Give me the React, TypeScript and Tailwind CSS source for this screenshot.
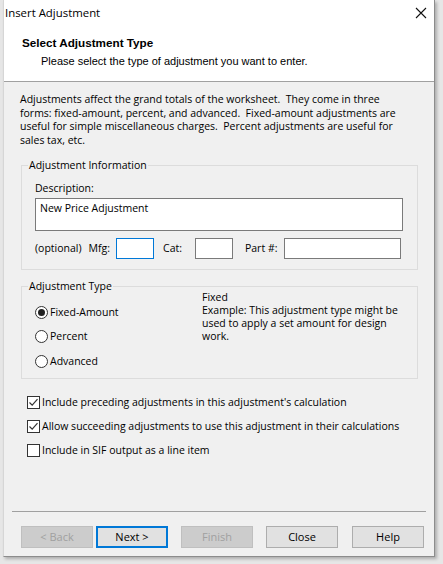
import React from 'react';

const ui = { fontFamily: '"Open Sans", "Noto Sans", sans-serif' };
const arial = { fontFamily: '"Liberation Sans", Arial, sans-serif' };

const Radio = ({ checked, label }: { checked?: boolean; label: string }) => (
  <div className="flex items-center h-[14px]">
    <span className="w-[13px] h-[13px] rounded-full border border-[#333] bg-white flex items-center justify-center">
      {checked && <span className="w-[7px] h-[7px] rounded-full bg-[#222]" />}
    </span>
    <span className="ml-[2px]">{label}</span>
  </div>
);

const Check = ({ checked, label }: { checked?: boolean; label: string }) => (
  <div className="flex items-center h-[14px]">
    <span className="w-[13px] h-[13px] border border-[#333] bg-white flex items-center justify-center">
      {checked && (
        <svg width="11" height="11" viewBox="0 0 11 11" fill="none">
          <path d="M1.5 5.5 L4.2 8.2 L9.5 2.2" stroke="#333" strokeWidth="1.2" />
        </svg>
      )}
    </span>
    <span className="ml-[2px]">{label}</span>
  </div>
);

const Btn = ({ label, disabled, focused }: { label: string; disabled?: boolean; focused?: boolean }) => (
  <div
    className={
      'w-[72px] h-[22px] shrink-0 flex items-center justify-center text-[11px] ' +
      (disabled
        ? 'bg-[#cccccc] border border-[#bfbfbf] text-[#a0a0a0]'
        : focused
        ? 'bg-[#e1e1e1] border-2 border-[#0078d7] text-black'
        : 'bg-[#e1e1e1] border border-[#adadad] text-black')
    }
  >
    {label}
  </div>
);

export default function App() {
  return (
    <div className="w-[443px] h-[564px] bg-[#e6e6e6] pl-[3px] pr-[8px] pb-[7px] text-[10.5px] text-black" style={ui}>
      <div className="h-full flex flex-col bg-[#f0f0f0] border-l border-[#d6d6d6] border-r border-b border-r-[#8c8c8c] border-b-[#8c8c8c] shadow-[2px_2px_3px_rgba(0,0,0,0.25)]">
        {/* title bar */}
        <div className="h-[26px] bg-white flex items-center justify-between pl-[1px] pr-[7px] shrink-0">
          <span className="text-[11.4px]">Insert Adjustment</span>
          <svg width="12" height="12" viewBox="0 0 12 12">
            <path d="M1 1 L11 11 M11 1 L1 11" stroke="#111" strokeWidth="1.1" />
          </svg>
        </div>

        {/* header */}
        <div className="h-[56px] bg-white border-b border-[#a0a0a0] pl-[18px] pt-[10px] shrink-0" style={arial}>
          <div className="font-bold text-[11.7px] leading-[14px]">Select Adjustment Type</div>
          <div className="text-[11px] leading-[13px] pl-[19px] mt-[5px]">
            Please select the type of adjustment you want to enter.
          </div>
        </div>

        {/* body */}
        <div className="flex-1 flex flex-col px-[16px] pt-[11px]">
          <p className="whitespace-pre leading-[13.6px]">
            {'Adjustments affect the grand totals of the worksheet.  They come in three\nforms: fixed-amount, percent, and advanced.  Fixed-amount adjustments are\nuseful for simple miscellaneous charges.  Percent adjustments are useful for\nsales tax, etc.'}
          </p>

          {/* Adjustment Information */}
          <div className="relative mt-[18px] ml-[1px] w-[397px] h-[105px] border border-[#dcdcdc]">
            <span className="absolute -top-[9px] left-[6px] bg-[#f0f0f0] px-[1px] leading-[16px]">Adjustment Information</span>
            <div className="pl-[13px] pt-[14px]">
              <div className="leading-[16px]">Description:</div>
              <div className="mt-[2px] w-[368px] h-[33px] bg-white border border-[#7a7a7a] pl-[4px] pt-[1px] leading-[16px]">
                New Price Adjustment
              </div>
              <div className="flex items-center mt-[7px] h-[21px]">
                <span>(optional)</span>
                <span className="ml-[7px]">Mfg:</span>
                <span className="ml-[6px] w-[38px] h-[21px] shrink-0 bg-white border border-[#0078d7]" />
                <span className="ml-[9px]">Cat:</span>
                <span className="ml-[13px] w-[38px] h-[21px] shrink-0 bg-white border border-[#7a7a7a]" />
                <span className="ml-[12px]">Part #:</span>
                <span className="ml-[7px] w-[117px] h-[21px] shrink-0 bg-white border border-[#7a7a7a]" />
              </div>
            </div>
          </div>

          {/* Adjustment Type */}
          <div className="relative mt-[16px] ml-[1px] w-[397px] h-[93px] border border-[#dcdcdc]">
            <span className="absolute -top-[9px] left-[6px] bg-[#f0f0f0] px-[1px] leading-[16px]">Adjustment Type</span>
            <div className="flex pl-[13px] pt-[4px]">
              <div className="w-[167px] flex flex-col gap-[10.5px] pt-[14px]">
                <Radio checked label="Fixed-Amount" />
                <Radio label="Percent" />
                <Radio label="Advanced" />
              </div>
              <div className="leading-[13px] whitespace-pre">
                {'Fixed\nExample: This adjustment type might be\nused to apply a set amount for design\nwork.'}
              </div>
            </div>
          </div>

          {/* checkboxes */}
          <div className="flex flex-col gap-[10px] mt-[16px] pl-[7px]">
            <Check checked label="Include preceding adjustments in this adjustment's calculation" />
            <Check checked label="Allow succeeding adjustments to use this adjustment in their calculations" />
            <Check label="Include in SIF output as a line item" />
          </div>

          <div className="flex-1" />
          <div className="-ml-[8px] -mr-[8px] border-t border-[#a0a0a0]" />
          <div className="flex items-center pt-[14px] pb-[8px] pl-[1px] -mr-[8px]">
            <Btn label="< Back" disabled />
            <span className="w-[3px] shrink-0" />
            <Btn label="Next >" focused />
            <span className="w-[13px] shrink-0" />
            <Btn label="Finish" disabled />
            <span className="w-[13px] shrink-0" />
            <Btn label="Close" />
            <span className="w-[14px] shrink-0" />
            <Btn label="Help" />
          </div>
        </div>
      </div>
    </div>
  );
}
